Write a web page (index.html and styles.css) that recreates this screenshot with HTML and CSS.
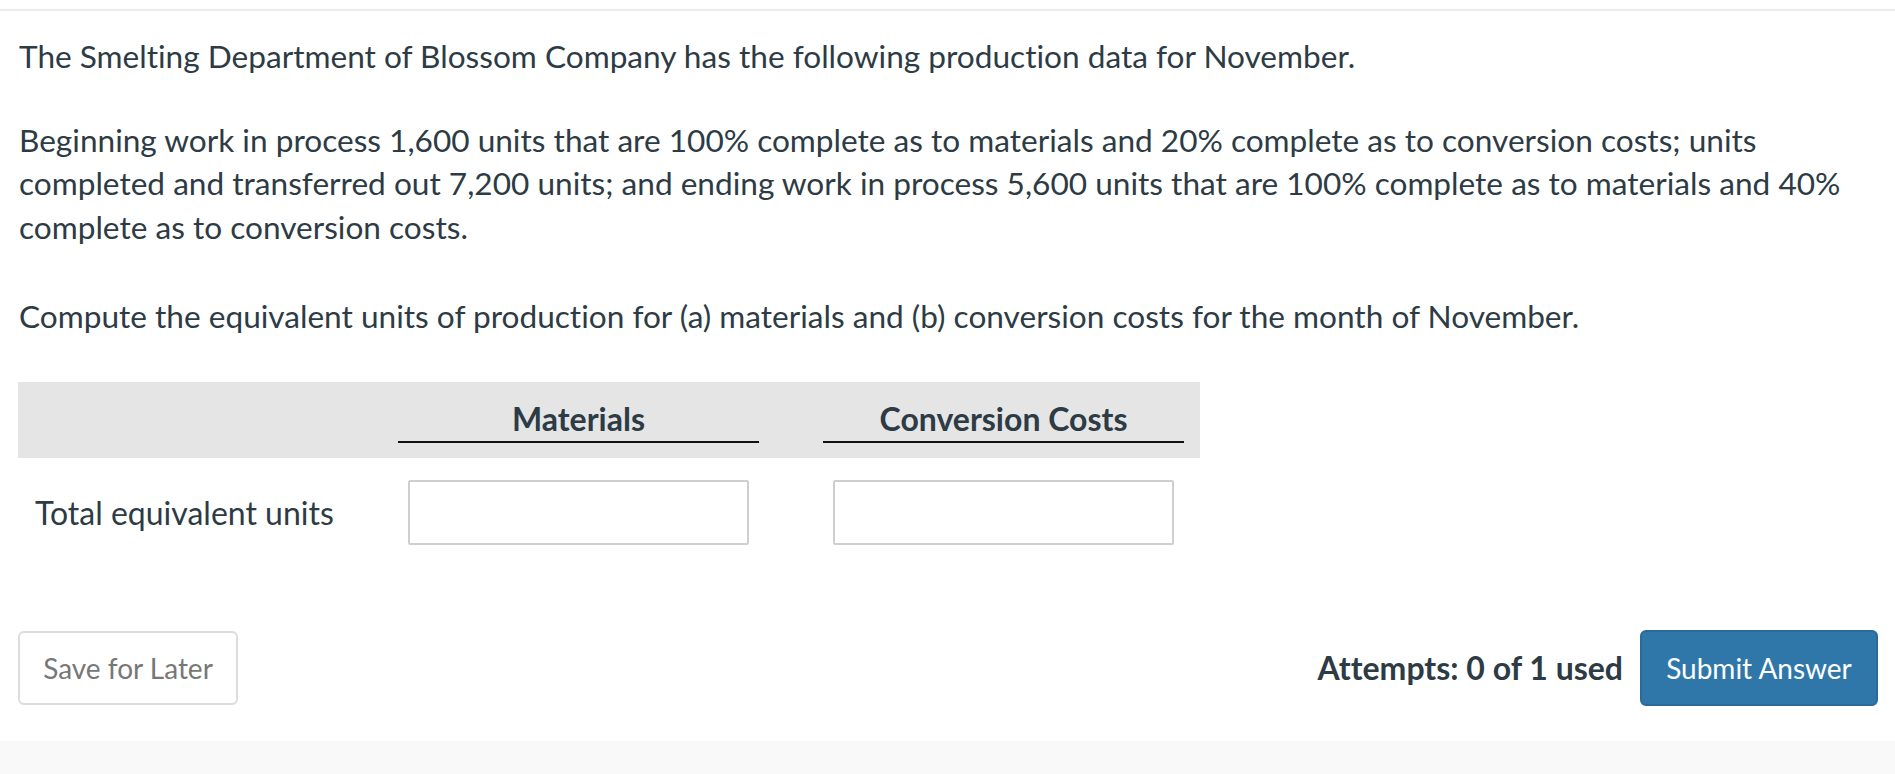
FILE: index.html
```html
<!DOCTYPE html>
<html lang="en">
<head>
  <meta charset="UTF-8">
  <meta name="viewport" content="width=device-width, initial-scale=1.0">
  <title>Equivalent Units</title>
  <link rel="stylesheet" href="styles.css">
</head>
<body>
  <div class="question">
    <p class="intro">The Smelting Department of Blossom Company has the following production data for November.</p>
    <p class="data">Beginning work in process 1,600 units that are 100% complete as to materials and 20% complete as to conversion costs; units completed and transferred out 7,200 units; and ending work in process 5,600 units that are 100% complete as to materials and 40% complete as to conversion costs.</p>
    <p>Compute the equivalent units of production for (a) materials and (b) conversion costs for the month of November.</p>

    <div class="eq-table">
      <div class="eq-head">
        <div class="eq-label"></div>
        <div class="eq-col">Materials</div>
        <div class="eq-col">Conversion Costs</div>
      </div>
      <div class="eq-row">
        <div class="eq-label">Total equivalent units</div>
        <div class="eq-cell"><input type="text" class="answer-input"></div>
        <div class="eq-cell"><input type="text" class="answer-input"></div>
      </div>
    </div>
  </div>

  <div class="actions">
    <button class="save-button">Save for Later</button>
    <div class="actions-right">
      <span class="attempts">Attempts: 0 of 1 used</span>
      <button class="submit-button">Submit Answer</button>
    </div>
  </div>

  <div class="bottom-band"></div>
</body>
</html>
```

FILE: styles.css
```css
body {
  font-family: 'Lato', 'Open Sans', sans-serif;
  font-variant-ligatures: none;
  margin: 0;
  padding: 0;
  background-color: white;
  color: #2d3b45;
}

.question {
  margin-top: 9px;
  border-top: 2px solid #ebebeb;
  padding: 24px 17px 0 19px;
}

.question p {
  margin: 0 0 43px 0;
  font-size: 31.6px;
  line-height: 43.5px;
}

.question .intro {
  margin-bottom: 40px;
}

.question .data {
  margin-bottom: 46px;
}

.eq-table {
  width: 1182px;
  margin-left: -1px;
}

.eq-head,
.eq-row {
  display: grid;
  grid-template-columns: 316px 361px 361px;
  column-gap: 64px;
  padding-right: 16px;
}

.eq-head {
  background-color: #e5e5e5;
  height: 76px;
  align-items: end;
}

.eq-col {
  font-size: 32px;
  font-weight: bold;
  text-align: center;
  border-bottom: 2px solid #111;
  padding-bottom: 3px;
  margin-bottom: 15px;
}

.eq-row {
  margin-top: 22px;
  align-items: center;
}

.eq-row .eq-label {
  font-size: 32px;
  padding-left: 17px;
}

.eq-cell {
  padding: 0 10px;
}

.answer-input {
  box-sizing: border-box;
  width: 100%;
  height: 65px;
  border: 2px solid #cfcfcf;
  border-radius: 2px;
  background: white;
  font-size: 28px;
  font-family: inherit;
}

.actions {
  display: flex;
  justify-content: space-between;
  align-items: center;
  padding: 85px 17px 35px 18px;
}

.actions-right {
  display: flex;
  align-items: center;
  gap: 17px;
}

.save-button {
  height: 74px;
  width: 220px;
  background: white;
  border: 2px solid #dcdcdc;
  border-radius: 6px;
  color: #777;
  font-family: inherit;
  font-size: 28px;
}

.attempts {
  font-size: 32px;
  font-weight: bold;
}

.submit-button {
  height: 76px;
  width: 238px;
  background-color: #3077a9;
  border: 2px solid #2a6a98;
  border-radius: 6px;
  color: white;
  font-family: inherit;
  font-size: 28px;
}

.bottom-band {
  background-color: #f9f9f9;
  height: 40px;
}
```
